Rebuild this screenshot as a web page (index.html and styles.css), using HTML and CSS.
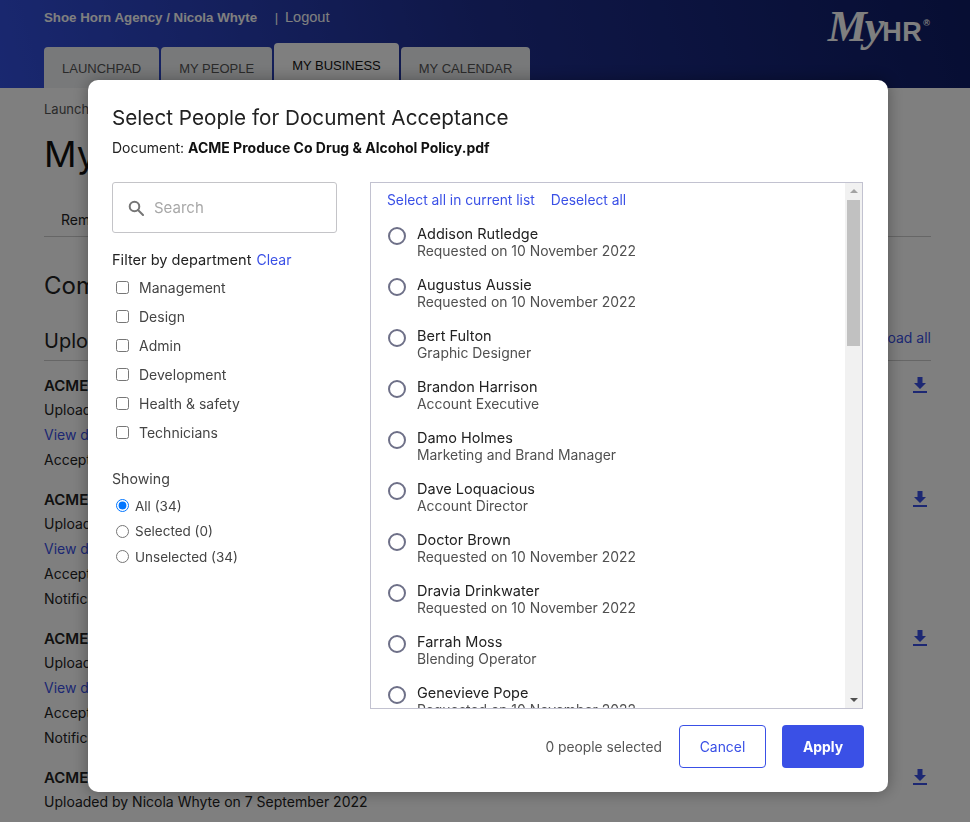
FILE: index.html
```html
<!DOCTYPE html>
<html lang="en">
<head>
  <meta charset="UTF-8" />
  <title>MyHR - Select People</title>
  <link rel="stylesheet" href="styles.css">
</head>
<body>
  <!-- Page behind the modal -->
  <header class="site-header">
    <div class="user-bar">
      <strong>Shoe Horn Agency / Nicola Whyte</strong>
      <span class="user-sep">|</span>
      <a href="#">Logout</a>
    </div>
    <div class="logo"><span class="logo-my">My</span><span class="logo-hr">HR</span><sup class="logo-reg">®</sup></div>
    <nav class="tabs">
      <a class="tab" href="#">LAUNCHPAD</a>
      <a class="tab" href="#">MY PEOPLE</a>
      <a class="tab active" href="#">MY BUSINESS</a>
      <a class="tab" href="#">MY CALENDAR</a>
    </nav>
  </header>

  <main class="page">
    <p class="crumbs">Launchpad</p>
    <h1>My Business</h1>
    <div class="subnav"><a href="#">Remuneration</a></div>
    <h2>Company Documents</h2>
    <div class="section-head">
      <h3>Uploaded documents</h3>
      <a href="#">Download all</a>
    </div>

    <div class="doc">
      <div class="doc-info">
        <h4>ACME Produce Co Employee Handbook.pdf</h4>
        <p>Uploaded by Nicola Whyte on 7 September 2022</p>
        <p><a href="#">View document</a></p>
        <p>Acceptance requested</p>
      </div>
      <div class="doc-icons">
        <a href="#"><svg width="14" height="14" viewBox="0 0 14 14"><rect width="14" height="14" rx="1"/></svg></a>
        <a href="#"><svg width="14" height="16" viewBox="0 0 14 16"><path d="M4.500 0h5v6H13L7 12 1 6h3.500z"/><rect y="14" width="14" height="2"/></svg></a>
      </div>
    </div>
    <div class="doc">
      <div class="doc-info">
        <h4>ACME Produce Co Drug &amp; Alcohol Policy.pdf</h4>
        <p>Uploaded by Nicola Whyte on 7 September 2022</p>
        <p><a href="#">View document</a></p>
        <p>Acceptance requested</p>
        <p>Notifications sent</p>
      </div>
      <div class="doc-icons">
        <a href="#"><svg width="14" height="14" viewBox="0 0 14 14"><rect width="14" height="14" rx="1"/></svg></a>
        <a href="#"><svg width="14" height="16" viewBox="0 0 14 16"><path d="M4.500 0h5v6H13L7 12 1 6h3.500z"/><rect y="14" width="14" height="2"/></svg></a>
      </div>
    </div>
    <div class="doc">
      <div class="doc-info">
        <h4>ACME Produce Co Privacy Policy.pdf</h4>
        <p>Uploaded by Nicola Whyte on 7 September 2022</p>
        <p><a href="#">View document</a></p>
        <p>Acceptance requested</p>
        <p>Notifications sent</p>
      </div>
      <div class="doc-icons">
        <a href="#"><svg width="14" height="14" viewBox="0 0 14 14"><rect width="14" height="14" rx="1"/></svg></a>
        <a href="#"><svg width="14" height="16" viewBox="0 0 14 16"><path d="M4.500 0h5v6H13L7 12 1 6h3.500z"/><rect y="14" width="14" height="2"/></svg></a>
      </div>
    </div>
    <div class="doc">
      <div class="doc-info">
        <h4>ACME Produce Co Leave Policy.pdf</h4>
        <p>Uploaded by Nicola Whyte on 7 September 2022</p>
      </div>
      <div class="doc-icons">
        <a href="#"><svg width="14" height="14" viewBox="0 0 14 14"><rect width="14" height="14" rx="1"/></svg></a>
        <a href="#"><svg width="14" height="16" viewBox="0 0 14 16"><path d="M4.500 0h5v6H13L7 12 1 6h3.500z"/><rect y="14" width="14" height="2"/></svg></a>
      </div>
    </div>
  </main>

  <div class="overlay"></div>

  <!-- Select people modal -->
  <div class="modal">
    <h2 class="modal-title">Select People for Document Acceptance</h2>
    <p class="modal-doc">Document: <strong>ACME Produce Co Drug &amp; Alcohol Policy.pdf</strong></p>

    <div class="modal-body">
      <div class="filters">
        <label class="search">
          <svg width="16" height="16" viewBox="0 0 16 16" fill="none" stroke="#757575" stroke-width="2"><circle cx="6.500" cy="6.500" r="4.800"/><path d="M10 10l5 5" stroke-linecap="round"/></svg>
          <input type="text" placeholder="Search">
        </label>

        <p class="filter-label"><span class="filter-text">Filter by department</span> <a href="#">Clear</a></p>
        <label class="check"><input type="checkbox"> Management</label>
        <label class="check"><input type="checkbox"> Design</label>
        <label class="check"><input type="checkbox"> Admin</label>
        <label class="check"><input type="checkbox"> Development</label>
        <label class="check"><input type="checkbox"> Health &amp; safety</label>
        <label class="check"><input type="checkbox"> Technicians</label>

        <p class="showing-label">Showing</p>
        <label class="radio"><input type="radio" name="showing" checked> All (34)</label>
        <label class="radio"><input type="radio" name="showing"> Selected (0)</label>
        <label class="radio"><input type="radio" name="showing"> Unselected (34)</label>
      </div>

      <div class="people">
        <div class="people-list">
          <div class="people-links">
            <a href="#">Select all in current list</a>
            <a href="#">Deselect all</a>
          </div>
          <div class="person"><span class="circle"></span><div><div class="person-name">Addison Rutledge</div><div class="person-sub">Requested on 10 November 2022</div></div></div>
          <div class="person"><span class="circle"></span><div><div class="person-name">Augustus Aussie</div><div class="person-sub">Requested on 10 November 2022</div></div></div>
          <div class="person"><span class="circle"></span><div><div class="person-name">Bert Fulton</div><div class="person-sub">Graphic Designer</div></div></div>
          <div class="person"><span class="circle"></span><div><div class="person-name">Brandon Harrison</div><div class="person-sub">Account Executive</div></div></div>
          <div class="person"><span class="circle"></span><div><div class="person-name">Damo Holmes</div><div class="person-sub">Marketing and Brand Manager</div></div></div>
          <div class="person"><span class="circle"></span><div><div class="person-name">Dave Loquacious</div><div class="person-sub">Account Director</div></div></div>
          <div class="person"><span class="circle"></span><div><div class="person-name">Doctor Brown</div><div class="person-sub">Requested on 10 November 2022</div></div></div>
          <div class="person"><span class="circle"></span><div><div class="person-name">Dravia Drinkwater</div><div class="person-sub">Requested on 10 November 2022</div></div></div>
          <div class="person"><span class="circle"></span><div><div class="person-name">Farrah Moss</div><div class="person-sub">Blending Operator</div></div></div>
          <div class="person"><span class="circle"></span><div><div class="person-name">Genevieve Pope</div><div class="person-sub">Requested on 10 November 2022</div></div></div>
        </div>
        <!-- Scrollbar, the headless browser hides the real one -->
        <div class="scrollbar">
          <span class="scroll-up"></span>
          <span class="scroll-thumb"></span>
          <span class="scroll-down"></span>
        </div>
      </div>
    </div>

    <div class="modal-foot">
      <span class="selected-count">0 people selected</span>
      <button class="btn btn-cancel">Cancel</button>
      <button class="btn btn-apply">Apply</button>
    </div>
  </div>
</body>
</html>
```

FILE: styles.css
```css
body {
  margin: 0;
  height: 822px;
  overflow: hidden;
  font-family: Inter, "Liberation Sans", sans-serif;
  font-size: 14px;
  color: #222;
  background-color: #fff;
}
a {
  color: #3a50e6;
  text-decoration: none;
}

/* Header */
.site-header {
  height: 88px;
  box-sizing: border-box;
  padding: 0 44px;
  display: flex;
  flex-direction: column;
  position: relative;
  background: linear-gradient(75deg, #3350e0 0%, #1f2f90 50%, #0e1c66 100%);
}
.user-bar {
  padding-top: 9px;
  height: 37px;
  box-sizing: border-box;
  font-family: "Liberation Sans", Arial, sans-serif;
  font-size: 13.300px;
  color: #fff;
}
.user-bar a {
  color: #fff;
  font-size: 14.600px;
}
.user-sep {
  margin: 0 3px 0 14px;
}
.logo {
  position: absolute;
  top: 1px;
  right: 40px;
  color: #fff;
  display: flex;
  align-items: baseline;
  font-family: "Liberation Sans", Arial, sans-serif;
  font-weight: bold;
}
.logo-my {
  font-family: "Liberation Serif", serif;
  font-style: italic;
  font-size: 44px;
  letter-spacing: -2px;
}
.logo-hr {
  font-size: 27px;
  letter-spacing: 0.500px;
}
.logo-reg {
  font-size: 9px;
  align-self: flex-start;
  margin: 17px 0 0 1px;
}
.tabs {
  margin-top: auto;
  display: flex;
  align-items: flex-end;
  gap: 2px;
}
.tab {
  display: block;
  height: 41px;
  box-sizing: border-box;
  padding: 14px 18px 0;
  background-color: #f1f3f5;
  border-radius: 4px 4px 0 0;
  font-family: "Liberation Sans", Arial, sans-serif;
  font-size: 13px;
  color: #555;
}
.tab.active {
  height: 45px;
  background-color: #fff;
  color: #111;
  padding-top: 15px;
}

/* Page behind */
.page {
  padding: 0 39px 0 44px;
}
.crumbs {
  margin: 13px 0 0;
  font-size: 13px;
  color: #555;
}
h1 {
  margin: 15px 0 0;
  font-size: 36px;
  font-weight: 400;
  color: #111;
}
.subnav {
  margin-top: 35px;
  padding: 0 17px 8px;
  border-bottom: 1px solid #ccc;
}
.subnav a {
  color: #222;
}
.page > h2 {
  margin: 34px 0 0;
  font-size: 24px;
  font-weight: 400;
}
.section-head {
  margin-top: 29px;
  display: flex;
  justify-content: space-between;
  align-items: flex-start;
  padding-bottom: 7px;
  border-bottom: 1px solid #ccc;
}
.section-head h3 {
  margin: 0;
  font-size: 20px;
  font-weight: 400;
}
.doc {
  display: flex;
  justify-content: space-between;
  padding-top: 15px;
  padding-bottom: 6px;
}
.doc-info h4 {
  margin: 0 0 -2px;
  font-size: 15px;
  line-height: 20px;
  font-weight: 600;
}
.doc-info p {
  margin: 0;
  padding-top: 6px;
  line-height: 19px;
  white-space: nowrap;
}
.doc-icons {
  display: flex;
  gap: 25px;
  margin-right: 4px;
  margin-top: 1px;
}
.doc-icons svg {
  fill: #3a50e6;
  display: block;
}

.overlay {
  position: fixed;
  inset: 0;
  background-color: rgba(0, 0, 0, 0.5);
}

/* Modal */
.modal {
  position: fixed;
  left: 88px;
  top: 80px;
  width: 800px;
  height: 712px;
  box-sizing: border-box;
  padding: 26px 24px 24px;
  background-color: #fff;
  border-radius: 10px;
  box-shadow: 0 0 16px rgba(0, 0, 0, 0.35);
  display: flex;
  flex-direction: column;
}
.modal-title {
  margin: 0;
  font-size: 20.700px;
  line-height: 24px;
  font-weight: 400;
  color: #222;
}
.modal-doc {
  margin: 8px 0 0;
  font-size: 14px;
  line-height: 20px;
  color: #222;
}
.modal-doc strong {
  color: #111;
}
.modal-body {
  margin-top: 24px;
  display: flex;
  gap: 33px;
}
.filters {
  width: 225px;
  flex: none;
}
.search {
  height: 51px;
  box-sizing: border-box;
  border: 1px solid #c4c4c8;
  border-radius: 3px;
  padding: 0 15px;
  display: flex;
  align-items: center;
  gap: 10px;
}
.search input {
  border: none;
  outline: none;
  width: 150px;
  padding: 0;
  font: inherit;
  font-size: 15px;
}
.search input::placeholder {
  color: #a8a8a8;
}
.filter-label {
  margin: 18px 0 4px;
  font-size: 14px;
  line-height: 18px;
}
.filter-text {
  font-size: 14.600px;
  margin-right: 1px;
}
.check {
  display: flex;
  align-items: center;
  height: 29px;
  font-size: 14px;
  color: #444;
}
.check input {
  margin: 0 10px 0 4px;
  width: 13px;
  height: 13px;
}
.showing-label {
  margin: 23px 0 5px;
  font-size: 14.200px;
  line-height: 18px;
  color: #444;
}
.radio {
  display: flex;
  align-items: center;
  height: 25.500px;
  font-size: 13.500px;
  color: #444;
}
.radio input {
  margin: 0 6px 0 4px;
  width: 13px;
  height: 13px;
}
.people {
  width: 493px;
  height: 527px;
  box-sizing: border-box;
  border: 1px solid #c2c2d0;
  display: flex;
}
.people-list {
  flex: 1;
  min-width: 0;
  overflow: hidden;
  padding: 8px 16px 0;
}
.people-links {
  display: flex;
  gap: 16px;
  font-size: 13.800px;
  line-height: 18px;
  margin-bottom: 17px;
}
.person {
  display: flex;
  gap: 11px;
  height: 51px;
  align-items: flex-start;
  padding-left: 1px;
}
.circle {
  flex: none;
  width: 14px;
  height: 14px;
  margin-top: 1px;
  border: 2px solid #6e7088;
  border-radius: 50%;
}
.person-name {
  font-size: 14.500px;
  line-height: 15px;
  margin-bottom: 2px;
  color: #222;
}
.person-sub {
  font-size: 13.900px;
  line-height: 17px;
  color: #505050;
}
.scrollbar {
  flex: none;
  width: 17px;
  background-color: #f1f1f1;
  display: flex;
  flex-direction: column;
  align-items: center;
}
.scroll-up {
  width: 0;
  height: 0;
  margin-top: 6px;
  margin-bottom: 7px;
  border-left: 4px solid transparent;
  border-right: 4px solid transparent;
  border-bottom: 4px solid #a3a3a3;
}
.scroll-thumb {
  width: 13px;
  height: 146px;
  background-color: #c1c1c1;
}
.scroll-down {
  width: 0;
  height: 0;
  margin-top: auto;
  margin-bottom: 6px;
  border-left: 4px solid transparent;
  border-right: 4px solid transparent;
  border-top: 4px solid #505050;
}
.modal-foot {
  margin-top: 16px;
  display: flex;
  justify-content: flex-end;
  align-items: center;
}
.selected-count {
  font-size: 13.800px;
  color: #555;
  margin-right: 17px;
}
.btn {
  height: 43px;
  border-radius: 4px;
  font-family: inherit;
  font-size: 13.900px;
  cursor: pointer;
}
.btn-cancel {
  width: 87px;
  background-color: #fff;
  border: 1px solid #3a50e6;
  color: #3a50e6;
  margin-right: 16px;
}
.btn-apply {
  width: 82px;
  background-color: #3a50e6;
  border: none;
  color: #fff;
  font-weight: 700;
}
```
